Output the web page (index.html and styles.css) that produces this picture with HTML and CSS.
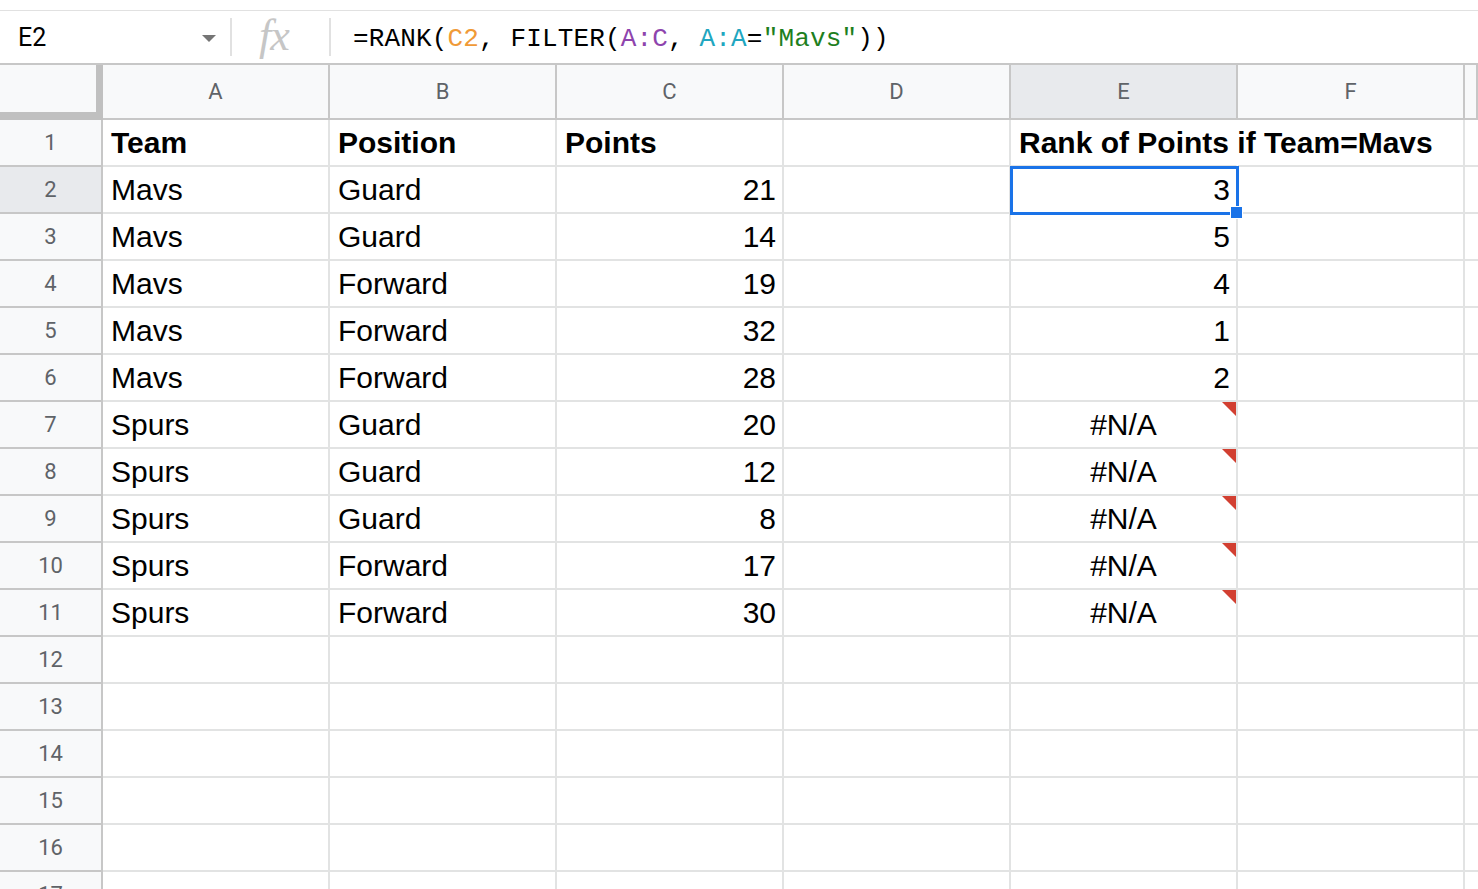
FILE: index.html
```html
<!DOCTYPE html>
<html lang="en">
<head>
    <meta charset="UTF-8">
    <title>Rank if - Sheet</title>
    <link rel="stylesheet" href="styles.css">
</head>
<body>
    <div class="formula-bar">
        <div class="name-box">
            <span class="name">E2</span>
            <span class="caret"></span>
        </div>
        <div class="fx">fx</div>
        <div class="formula">=RANK(<span class="ref-c">C2</span>, FILTER(<span class="ref-a">A:C</span>, <span class="ref-b">A:A</span>=<span class="str">"Mavs"</span>))</div>
    </div>

    <div class="sheet">
        <div class="row head">
            <div class="corner"></div>
            <div class="col-head">A</div>
            <div class="col-head">B</div>
            <div class="col-head">C</div>
            <div class="col-head">D</div>
            <div class="col-head active">E</div>
            <div class="col-head">F</div>
            <div class="col-head"></div>
        </div>

        <div class="row">
            <div class="row-head">1</div>
            <div class="cell bold">Team</div>
            <div class="cell bold">Position</div>
            <div class="cell bold">Points</div>
            <div class="cell"></div>
            <div class="cell bold spill">Rank of Points if Team=Mavs</div>
            <div class="cell"></div>
            <div class="cell"></div>
        </div>
        <div class="row">
            <div class="row-head active">2</div>
            <div class="cell">Mavs</div>
            <div class="cell">Guard</div>
            <div class="cell num">21</div>
            <div class="cell"></div>
            <div class="cell num selected">3<span class="handle"></span></div>
            <div class="cell"></div>
            <div class="cell"></div>
        </div>
        <div class="row">
            <div class="row-head">3</div>
            <div class="cell">Mavs</div>
            <div class="cell">Guard</div>
            <div class="cell num">14</div>
            <div class="cell"></div>
            <div class="cell num">5</div>
            <div class="cell"></div>
            <div class="cell"></div>
        </div>
        <div class="row">
            <div class="row-head">4</div>
            <div class="cell">Mavs</div>
            <div class="cell">Forward</div>
            <div class="cell num">19</div>
            <div class="cell"></div>
            <div class="cell num">4</div>
            <div class="cell"></div>
            <div class="cell"></div>
        </div>
        <div class="row">
            <div class="row-head">5</div>
            <div class="cell">Mavs</div>
            <div class="cell">Forward</div>
            <div class="cell num">32</div>
            <div class="cell"></div>
            <div class="cell num">1</div>
            <div class="cell"></div>
            <div class="cell"></div>
        </div>
        <div class="row">
            <div class="row-head">6</div>
            <div class="cell">Mavs</div>
            <div class="cell">Forward</div>
            <div class="cell num">28</div>
            <div class="cell"></div>
            <div class="cell num">2</div>
            <div class="cell"></div>
            <div class="cell"></div>
        </div>
        <div class="row">
            <div class="row-head">7</div>
            <div class="cell">Spurs</div>
            <div class="cell">Guard</div>
            <div class="cell num">20</div>
            <div class="cell"></div>
            <div class="cell error">#N/A</div>
            <div class="cell"></div>
            <div class="cell"></div>
        </div>
        <div class="row">
            <div class="row-head">8</div>
            <div class="cell">Spurs</div>
            <div class="cell">Guard</div>
            <div class="cell num">12</div>
            <div class="cell"></div>
            <div class="cell error">#N/A</div>
            <div class="cell"></div>
            <div class="cell"></div>
        </div>
        <div class="row">
            <div class="row-head">9</div>
            <div class="cell">Spurs</div>
            <div class="cell">Guard</div>
            <div class="cell num">8</div>
            <div class="cell"></div>
            <div class="cell error">#N/A</div>
            <div class="cell"></div>
            <div class="cell"></div>
        </div>
        <div class="row">
            <div class="row-head">10</div>
            <div class="cell">Spurs</div>
            <div class="cell">Forward</div>
            <div class="cell num">17</div>
            <div class="cell"></div>
            <div class="cell error">#N/A</div>
            <div class="cell"></div>
            <div class="cell"></div>
        </div>
        <div class="row">
            <div class="row-head">11</div>
            <div class="cell">Spurs</div>
            <div class="cell">Forward</div>
            <div class="cell num">30</div>
            <div class="cell"></div>
            <div class="cell error">#N/A</div>
            <div class="cell"></div>
            <div class="cell"></div>
        </div>
        <div class="row">
            <div class="row-head">12</div>
            <div class="cell"></div><div class="cell"></div><div class="cell"></div><div class="cell"></div><div class="cell"></div><div class="cell"></div><div class="cell"></div>
        </div>
        <div class="row">
            <div class="row-head">13</div>
            <div class="cell"></div><div class="cell"></div><div class="cell"></div><div class="cell"></div><div class="cell"></div><div class="cell"></div><div class="cell"></div>
        </div>
        <div class="row">
            <div class="row-head">14</div>
            <div class="cell"></div><div class="cell"></div><div class="cell"></div><div class="cell"></div><div class="cell"></div><div class="cell"></div><div class="cell"></div>
        </div>
        <div class="row">
            <div class="row-head">15</div>
            <div class="cell"></div><div class="cell"></div><div class="cell"></div><div class="cell"></div><div class="cell"></div><div class="cell"></div><div class="cell"></div>
        </div>
        <div class="row">
            <div class="row-head">16</div>
            <div class="cell"></div><div class="cell"></div><div class="cell"></div><div class="cell"></div><div class="cell"></div><div class="cell"></div><div class="cell"></div>
        </div>
        <div class="row">
            <div class="row-head">17</div>
            <div class="cell"></div><div class="cell"></div><div class="cell"></div><div class="cell"></div><div class="cell"></div><div class="cell"></div><div class="cell"></div>
        </div>
    </div>
</body>
</html>
```

FILE: styles.css
```css
* {
    box-sizing: border-box;
}

body {
    margin: 0;
    height: 889px;
    overflow: hidden;
    background-color: #ffffff;
    font-family: 'Liberation Sans', Arial, sans-serif;
    color: #000000;
}

/* barra de formula */
.formula-bar {
    margin-top: 10px;
    height: 55px;
    border-top: 1px solid #e1e1e1;
    border-bottom: 2px solid #c7c7c7;
    display: flex;
    align-items: center;
}

.name-box {
    width: 232px;
    height: 38px;
    padding: 0 14px 0 18px;
    display: flex;
    align-items: center;
    justify-content: space-between;
    border-right: 2px solid #e1e1e1;
}

.name-box .name {
    font-family: Roboto, 'Liberation Sans', sans-serif;
    font-size: 25px;
    color: #000000;
}

.caret {
    width: 0;
    height: 0;
    border-left: 7px solid transparent;
    border-right: 7px solid transparent;
    border-top: 7px solid #757575;
    margin-top: 3px;
}

.fx {
    width: 99px;
    height: 38px;
    padding-left: 27px;
    border-right: 2px solid #e1e1e1;
    font-family: 'Liberation Serif', serif;
    font-style: italic;
    font-size: 44px;
    line-height: 36px;
    letter-spacing: -1px;
    color: #c6c6c6;
}

.formula {
    padding-left: 22px;
    font-family: 'Liberation Mono', monospace;
    font-size: 26px;
    letter-spacing: 0.15px;
    color: #000000;
    padding-top: 3px;
}

.ref-c { color: #f09a37; }
.ref-a { color: #8e44ad; }
.ref-b { color: #21a6c0; }
.str { color: #1e7f1e; }

/* hoja */
.row {
    display: grid;
    grid-template-columns: 103px repeat(6, 227px) 1fr;
    height: 47px;
}

.row.head {
    height: 55px;
}

.corner {
    background-color: #f8f9fa;
    border-right: 7px solid #c0c0c0;
    border-bottom: 8px solid #c0c0c0;
}

.col-head {
    background-color: #f8f9fa;
    border-right: 2px solid #c7c7c7;
    border-bottom: 2px solid #c7c7c7;
    display: flex;
    align-items: center;
    justify-content: center;
    font-family: Roboto, 'Liberation Sans', sans-serif;
    font-size: 22px;
    color: #5f6368;
}

.col-head.active {
    background-color: #e8eaed;
}

.row-head {
    background-color: #f8f9fa;
    border-right: 2px solid #c7c7c7;
    border-bottom: 2px solid #c7c7c7;
    display: flex;
    align-items: center;
    justify-content: center;
    font-family: Roboto, 'Liberation Sans', sans-serif;
    font-size: 22px;
    color: #5f6368;
}

.row-head.active {
    background-color: #e8eaed;
}

.cell {
    position: relative;
    border-right: 2px solid #e2e3e3;
    border-bottom: 2px solid #e2e3e3;
    padding: 0 6px 4px 8px;
    display: flex;
    align-items: flex-end;
    font-size: 30px;
    line-height: 36px;
    white-space: nowrap;
}

.cell.bold {
    font-weight: bold;
}

.cell.num {
    justify-content: flex-end;
}

.cell.spill {
    border-right-color: transparent;
    overflow: visible;
    z-index: 1;
}

.cell.error {
    justify-content: center;
    padding-left: 8px;
    padding-right: 8px;
}

.cell.error::after {
    content: "";
    position: absolute;
    top: 0;
    right: 0;
    border-top: 14px solid #d23f31;
    border-left: 14px solid transparent;
}

.cell.selected {
    outline: 3px solid #1a73e8;
    outline-offset: -2px;
    z-index: 2;
}

.handle {
    position: absolute;
    right: -7px;
    bottom: -7px;
    width: 13px;
    height: 13px;
    background-color: #1a73e8;
    border: 1px solid #ffffff;
}
```
